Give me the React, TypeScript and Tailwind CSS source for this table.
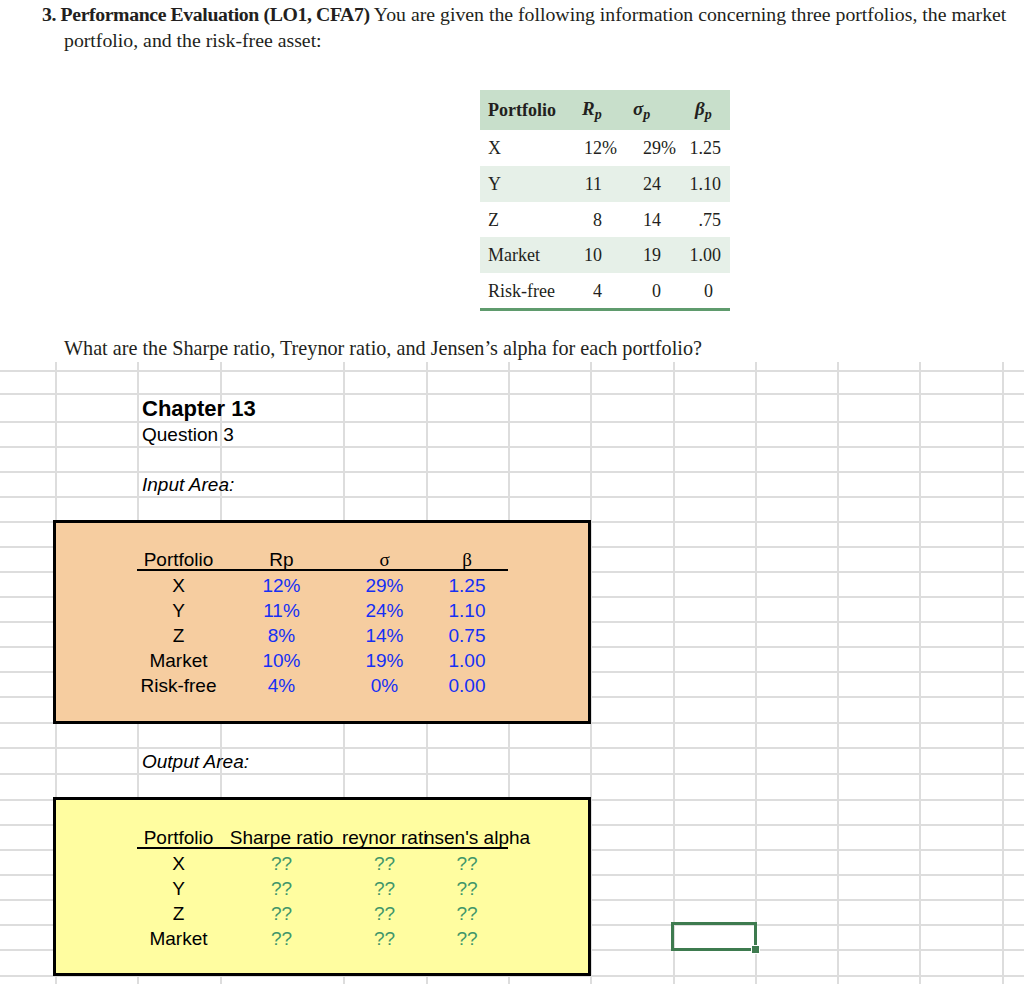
import React from 'react';

const COLS = 13;
const ROWS = 26;

const tableRows = [
  { name: 'X', rp: '12', rpPct: true, sd: '29', sdPct: true, b: '1.25', bPad: 'pr-[9px]', stripe: false, h: 'h-[36px]' },
  { name: 'Y', rp: '11', rpPct: false, sd: '24', sdPct: false, b: '1.10', bPad: 'pr-[9px]', stripe: true, h: 'h-[36px]' },
  { name: 'Z', rp: '8', rpPct: false, sd: '14', sdPct: false, b: '.75', bPad: 'pr-[9px]', stripe: false, h: 'h-[35px]' },
  { name: 'Market', rp: '10', rpPct: false, sd: '19', sdPct: false, b: '1.00', bPad: 'pr-[9px]', stripe: true, h: 'h-[36px]' },
  { name: 'Risk-free', rp: '4', rpPct: false, sd: '0', sdPct: false, b: '0', bPad: 'pr-[17px]', stripe: false, h: 'h-[35px]' },
];

const inputRows = [
  ['X', '12%', '29%', '1.25'],
  ['Y', '11%', '24%', '1.10'],
  ['Z', '8%', '14%', '0.75'],
  ['Market', '10%', '19%', '1.00'],
  ['Risk-free', '4%', '0%', '0.00'],
];

const outputRows = ['X', 'Y', 'Z', 'Market'];

function Pct({ on }: { on: boolean }) {
  return on ? <span className="inline-block w-0 tracking-[-1px]">%</span> : null;
}

export default function App() {
  return (
    <div className="w-[1024px] h-[984px] overflow-hidden bg-white text-[#231f20]">
      {/* Textbook part */}
      <div className="font-['Liberation_Serif',serif] text-[19.8px] leading-[26px] pt-[1px]">
        <p className="pl-[64px] -indent-[22px] whitespace-nowrap">
          <b className="tracking-[-0.4px]">3. Performance Evaluation (LO1, CFA7)</b> You are given the following information concerning three portfolios, the market
          <br />
          portfolio, and the risk-free asset:
        </p>

        <div className="ml-[480px] mt-[37px] w-[250px] text-[18px] leading-none border-b-[3px] border-[#5f9b6d]">
          <div className="grid grid-cols-[92px_48px_60px_50px] h-[40px] items-center bg-[#c8dfcb] font-bold">
            <div className="pl-[8px]">Portfolio</div>
            <div className="pl-[10px] italic text-[19px]">
              R<span className="text-[14px] align-[-4px]">p</span>
            </div>
            <div className="pl-[13px] italic text-[19px]">
              σ<span className="text-[14px] align-[-4px]">p</span>
            </div>
            <div className="pl-[15px] italic text-[19px]">
              β<span className="text-[14px] align-[-4px]">p</span>
            </div>
          </div>
          {tableRows.map((r) => (
            <div
              key={r.name}
              className={`grid grid-cols-[92px_48px_60px_50px] items-center ${r.h} ${r.stripe ? 'bg-[#e6f0e8]' : ''}`}
            >
              <div className="pl-[8px]">{r.name}</div>
              <div className="text-right pr-[18px]">
                {r.rp}
                <Pct on={r.rpPct} />
              </div>
              <div className="text-right pr-[19px]">
                {r.sd}
                <Pct on={r.sdPct} />
              </div>
              <div className={`text-right ${r.bPad}`}>{r.b}</div>
            </div>
          ))}
        </div>

        <p className="ml-[64px] mt-[24px] text-[20.2px]">
          What are the Sharpe ratio, Treynor ratio, and Jensen’s alpha for each portfolio?
        </p>
      </div>

      {/* Spreadsheet part */}
      <div className="mt-[1px] grid font-['Liberation_Sans',Arial,sans-serif] text-[19px] leading-none text-black">
        <div className="[grid-area:1/1] grid grid-cols-[55px_82px_83px_123px_83px_82px_82px_83px_82px_82px_82px_83px_22px] grid-rows-[8px_23px_28px_repeat(11,25px)_26px_25px_26px_26px_repeat(6,25px)_26px_9px]">
          {Array.from({ length: ROWS * COLS }, (_, i) => {
            const r = Math.floor(i / COLS);
            const c = i % COLS;
            return (
              <div
                key={i}
                className={`${c > 0 ? 'border-l-2' : ''} ${r > 0 ? 'border-t-2' : ''} border-[#dddddd]`}
              />
            );
          })}
        </div>

        <div className="[grid-area:1/1] grid grid-cols-[55px_82px_83px_123px_83px_82px_82px_83px_82px_82px_82px_83px_22px] grid-rows-[8px_23px_28px_repeat(11,25px)_26px_25px_26px_26px_repeat(6,25px)_26px_9px]">
          <div className="[grid-column:3/6] [grid-row:3/4] flex items-center pt-[3px] pl-[5px] text-[22px] font-bold whitespace-nowrap">
            Chapter 13
          </div>
          <div className="[grid-column:3/6] [grid-row:4/5] flex items-center pt-[2px] pl-[5px] whitespace-nowrap">
            Question 3
          </div>
          <div className="[grid-column:3/6] [grid-row:6/7] flex items-center pt-[2px] pl-[5px] italic whitespace-nowrap">
            Input Area:
          </div>
          <div className="[grid-column:3/6] [grid-row:17/18] flex items-center pt-[2px] pl-[5px] italic whitespace-nowrap">
            Output Area:
          </div>

          {/* Input box */}
          <div className="[grid-column:2/8] [grid-row:8/16] -ml-[2px] -mr-[1px] -mt-[1px] -mb-[2px] border-[3px] border-black bg-[#f6cda0]" />
          <div className="[grid-column:3/7] [grid-row:9/15] grid grid-cols-[83px_123px_83px_82px] grid-rows-[repeat(6,25px)]">
            <div className="flex items-center justify-center pt-[3px] border-b-2 border-black">Portfolio</div>
            <div className="flex items-center justify-center pt-[3px] border-b-2 border-black">Rp</div>
            <div className="flex items-center justify-center pt-[3px] border-b-2 border-black font-['Liberation_Serif',serif]">σ</div>
            <div className="flex items-center justify-center pt-[3px] border-b-2 border-black font-['Liberation_Serif',serif]">β</div>
            {inputRows.map((r) => (
              <React.Fragment key={r[0]}>
                <div className="flex items-center justify-center pt-[3px] whitespace-nowrap">{r[0]}</div>
                <div className="flex items-center justify-center pt-[3px] text-[#1530f5]">{r[1]}</div>
                <div className="flex items-center justify-center pt-[3px] text-[#1530f5]">{r[2]}</div>
                <div className="flex items-center justify-center pt-[3px] text-[#1530f5]">{r[3]}</div>
              </React.Fragment>
            ))}
          </div>

          {/* Output box */}
          <div className="[grid-column:2/8] [grid-row:19/26] -ml-[2px] -mr-[1px] -mt-[2px] -mb-[1px] border-[3px] border-black bg-[#fffda0]" />
          <div className="[grid-column:3/7] [grid-row:20/25] grid grid-cols-[83px_123px_83px_82px] grid-rows-[repeat(5,25px)]">
            <div className="flex items-center justify-center pt-[3px] border-b-2 border-black whitespace-nowrap">Portfolio</div>
            <div className="flex items-center justify-center pt-[3px] border-b-2 border-black whitespace-nowrap">Sharpe ratio</div>
            <div className="flex items-center justify-center pt-[3px] border-b-2 border-black whitespace-nowrap overflow-hidden">
              Treynor ratio
            </div>
            <div className="flex items-center justify-center pt-[3px] border-b-2 border-black whitespace-nowrap [clip-path:inset(0_-200px_0_0)]">
              Jensen's alpha
            </div>
            {outputRows.map((name) => (
              <React.Fragment key={name}>
                <div className="flex items-center justify-center pt-[3px] whitespace-nowrap">{name}</div>
                <div className="flex items-center justify-center pt-[3px] text-[#3f966a]">??</div>
                <div className="flex items-center justify-center pt-[3px] text-[#3f966a]">??</div>
                <div className="flex items-center justify-center pt-[3px] text-[#3f966a]">??</div>
              </React.Fragment>
            ))}
          </div>

          {/* Selected cell */}
          <div className="[grid-column:9/10] [grid-row:24/25] relative -m-[2px] border-[3px] border-[#3e7b4f]">
            <div className="absolute -right-[6px] -bottom-[6px] w-[9px] h-[9px] bg-[#3e7b4f] border border-white" />
          </div>
        </div>
      </div>
    </div>
  );
}
